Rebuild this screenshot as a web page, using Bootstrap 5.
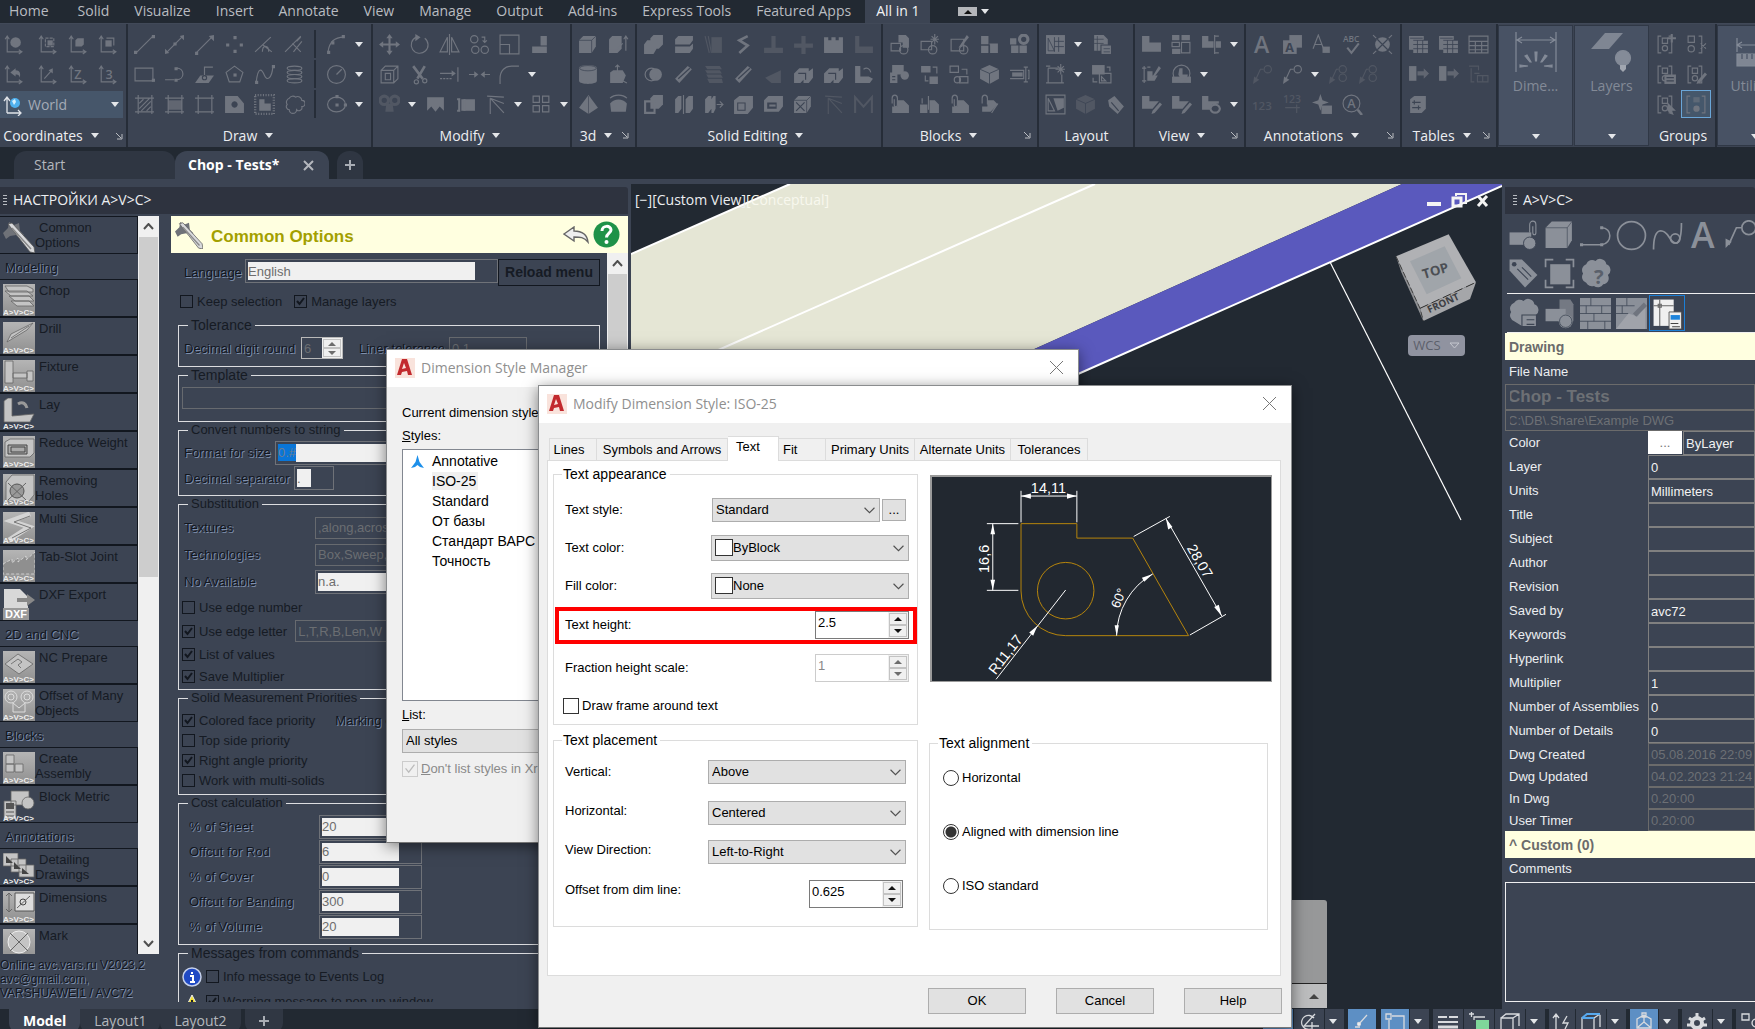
<!DOCTYPE html>
<html lang="en">
<head>
<meta charset="utf-8">
<meta name="viewport" content="width=device-width, initial-scale=1">
<title>Chop - Tests</title>
<link rel="stylesheet" href="https://cdn.jsdelivr.net/npm/bootstrap@5.3.0/dist/css/bootstrap.min.css">
<style>
:root{--ink:#222932;--panel:#3c4453;--head:#2e333f;--ui:"Open Sans","Noto Sans",sans-serif;--gdi:"Liberation Sans",Arial,sans-serif;--cream:#ffffe0}
body{font:14px/18px var(--ui);background:var(--ink);color:#eceef1;overflow:hidden}
button,input,select,textarea{font:inherit;color:inherit;border-radius:0}
svg{display:block;flex:none}
.tri{width:0;height:0;border:4px solid transparent;border-top:5px solid #e4e6e9;border-bottom:0;flex:none}
/* menu */
.menubar{height:23px;background:var(--ink)}
.menubar a{color:#b9bcc1;text-decoration:none;padding:0 12px 0 13px;line-height:21px;height:23px;white-space:nowrap}
.menubar a:first-child{padding-left:9px}
.menubar a.on{background:var(--panel);color:#f2f3f5;padding:0 11px;margin-left:2px}
.chip{width:19px;height:9px;background:#b4b6ba;border:0;padding:0}
/* ribbon */
.ribbon{height:124px;background:var(--panel);border-top:1px solid #414958;overflow:hidden}
.pane{border-right:2px solid #262d38;padding:5px 0 0 1px;flex:none;display:flex;flex-direction:column;height:123px}
.irow{display:flex;height:30px;align-items:center;color:#70757f}
.ucs{padding-left:0}
.ucs .rb:first-child{width:26px;margin-right:6px}
.rb{width:30px;height:28px;border:0;background:none;padding:0;display:flex;align-items:center;justify-content:center;color:inherit;flex:none}
.rb svg{width:21px;height:21px;fill:none;stroke:currentColor;stroke-width:1.1}
.rb svg .f,.tool svg .f{fill:currentColor;stroke:none}
.rb.dim{color:#515763}
.rb.on{background:#45576b;border:1px solid #6aa6d8}
.cr{width:16px;border:0;background:none;padding:0;display:flex;justify-content:center;flex:none}
.bar{width:2px;height:28px;background:#262d38;margin:0 5px}
.ptitle{display:flex;align-items:center;margin-top:5px;height:23px;gap:8px;justify-content:center;position:relative}
.launch{position:absolute;right:6px;top:7px}
.slab{background:#485264;border:1px solid #303846;color:#838a97;flex:none;display:flex;flex-direction:column;align-items:center;justify-content:space-between;padding:6px 0 6px;margin:1px 1px 1px 0;height:121px}
.slab span{margin-bottom:34px}
.slab svg{fill:none;stroke:#848b98;stroke-width:1.2}
/* document tabs */
.doctabs{height:32px;background:var(--ink);padding:4px 0 0 14px}
.doctabs .dt{height:28px;line-height:28px;border:0;padding:0 20px;text-align:left;border-radius:12px 12px 0 0;background:#2f3642;color:#b4b7bd}
.doctabs .dt.on{background:var(--panel);color:#fff;font-weight:700}
.dt.plus{width:26px}
/* palettes */
.pal{background:var(--panel)}
.palhead{height:27px;background:var(--head);display:flex;align-items:center;padding-left:3px;gap:6px;border-radius:0 3px 0 0}
.palhead span{padding-bottom:1px}
.grip{width:4px;height:11px;background:repeating-linear-gradient(#b8bbc0 0 1px,transparent 1px 3px)}
.gdi{font:13px/15px var(--gdi)}
.scroll{background:#f0f0f0;width:21px;flex:none;display:flex;flex-direction:column;align-items:center}
.scroll button{border:0;background:#f0f0f0;height:21px;width:100%;padding:0;display:flex;align-items:center;justify-content:center}
.thumb{background:#cdcdcd;width:19px}
.chev{fill:none;stroke:#505050;stroke-width:2}
.nav-l{width:138px;flex:none;overflow:hidden}
.navi{display:flex;width:138px;height:38px;padding:4px 0 0 3px;border:1px solid #12171f;border-width:1px 1px 1px 0;background:none;text-align:left;color:#161b24;align-items:flex-start}
.navi span{text-indent:4px;margin-top:-1px}
.navi svg{width:32px;height:32px}
.navh{height:25px;line-height:27px;padding-left:5px}
.emb{color:#12161e;text-shadow:1px 1px 0 #7f90ae}
.side{color:#161b24}
.yhead{background:var(--cream);height:37px;flex:none}
.yhead h1{font:bold 17px/20px var(--gdi);color:#a3a000;margin:0;padding:5px 0 0 8px}
.side fieldset{border:1px solid #dcdde0;padding:0 3px;margin:0 7px;min-width:0}
.side legend{float:none;width:auto;font:14px/16px var(--gdi);padding:0 3px;margin:0 0 0 6px}
.side legend.sm{font-size:13px}
.fr{display:flex;align-items:center;height:25px;white-space:nowrap}
.fr>label:first-child{padding-left:2px;flex:none}
.fin{border:1px solid #6f7278;background:transparent;height:24px;padding:2px;display:flex;min-width:0}
.fin input{border:0;background:#f0f0f0;color:#6d6d6d;width:100%;padding:0;height:18px;min-width:0;font-size:13px}
.cost{width:103px;padding-right:22px}
.fdis{border:1px solid #676a6f;background:transparent;color:#6b6e72;height:22px;padding:0 2px;min-width:0}
.ck{appearance:none;width:13px;height:13px;border:1px solid #12171f;margin:0 4px 0 0;flex:none;background:none}
.ck:checked{background:url("data:image/svg+xml,%3Csvg xmlns='http://www.w3.org/2000/svg' viewBox='0 0 11 11'%3E%3Cpath d='M2 5l2.5 3L9 2' fill='none' stroke='%2312171f' stroke-width='2'/%3E%3C/svg%3E")}
.fr label.c{display:flex;align-items:center}
.fr label.c:first-child{padding:0}
.spin{display:flex;flex-direction:column;width:20px;flex:none;background:#f0f0f0;padding:1px}
.spin button{flex:1;border:1px solid #c3c3c3;background:#f0f0f0;padding:0;display:flex;align-items:center;justify-content:center;min-height:0}
.up,.dn{width:0;height:0;border:4px solid transparent}
.up{border-top:0;border-bottom-color:#111}.dn{border-bottom:0;border-top-color:#111}
.gray .up{border-bottom-color:#6d6d6d}.gray .dn{border-top-color:#6d6d6d}
/* drawing area */
.view{position:relative;overflow:hidden;background:var(--ink)}
.view>svg.scene{position:absolute;inset:0}
.over{position:absolute}
/* right palette */
.rp{width:253px;flex:none;padding-left:3px;overflow:hidden}
.tool{width:36px;height:36px;border:0;background:none;padding:0;display:flex;align-items:center;justify-content:center;color:#8b9099;flex:none}
.tool svg{width:31px;height:31px;fill:none;stroke:currentColor;stroke-width:1.1}
.tool.on{border:1px solid #1c7fd6;color:#f0f0f0}
.rule{height:1px;background:#f0f0f0;margin-left:2px}
.ysub{background:var(--cream);height:27px;line-height:29px;color:#6b6b6b;font-weight:700;padding-left:4px;font-size:14px}
.prop{display:flex;height:24px}
.prop>label{width:143px;flex:none;padding:4px 0 0 4px;white-space:nowrap}
.prop input{flex:1;min-width:0;border:1px solid #808080;background:none;padding:0 2px;color:#f2f2f2}
.prop.low{height:22px}.prop.low input,.path{color:#6d7075!important;border-color:#6b6b6b!important}
/* dialogs */
.dlg{position:absolute;background:#f0f0f0;color:#000;border:1px solid #8a8c8e;border-bottom-color:#777;box-shadow:0 3px 14px rgba(0,0,0,.5);font:13px/16px var(--gdi)}
.dtitle{height:37px;background:#fff;color:#8f8f8f;display:flex;align-items:center;padding:0 15px 2px 8px;gap:6px;font:14px/20px var(--ui)}
.dtitle button{margin-left:auto;border:0;background:none;padding:0}
.dsel{appearance:none;height:24px;border:1px solid #adadad;border-radius:0;color:#000;padding:0 3px;background:#e1e1e1 url("data:image/svg+xml,%3Csvg xmlns='http://www.w3.org/2000/svg' viewBox='0 0 10 6'%3E%3Cpath d='M.5.5L5 5L9.500.5' fill='none' stroke='%23505050'/%3E%3C/svg%3E") no-repeat right 4px center/11px 7px;min-width:0}
.dbtn{border:1px solid #adadad;background:#e1e1e1;padding:0}
.ttab{border:1px solid #dcdcdc;border-left:0;border-bottom:0;background:#f0f0f0;height:22px;padding:0;white-space:nowrap}
.ttab:first-child{border-left:1px solid #dcdcdc}
.ttab.on{background:#fff;height:25px;position:relative;margin-bottom:-1px;padding-bottom:5px}
.dlg fieldset{border:1px solid #dcdcdc;padding:0 8px 0 11px;min-width:0}
.dlg legend{float:none;width:auto;font:14px/16px var(--gdi);padding:0 3px 0 1px;margin:0 0 0 -3px}
.drow{display:flex;align-items:center;height:38px}
.drow>.nm{margin-right:auto;white-space:nowrap}
.num{display:flex;border:1px solid #7a7a7a;width:94px;height:28px;background:#fff}
.num input{border:0;padding:0 2px 5px;width:72px;flex:1;min-width:0;background:#fff}
.num.gray{border-color:#ccc}.num.gray input{color:#888}
.sw{position:absolute;left:4px;top:4px;width:18px;height:17px;background:#fff;border:1px solid #333}
.dck{appearance:none;width:16px;height:16px;border:1px solid #333;background:#fff;margin:0 3px 0 0;flex:none}
.dck:checked{background:url("data:image/svg+xml,%3Csvg xmlns='http://www.w3.org/2000/svg' viewBox='0 0 11 11'%3E%3Cpath d='M2 5l2.500 3L9 2' fill='none' stroke='%23bbb' stroke-width='1'/%3E%3C/svg%3E")}
.drad{appearance:none;width:16px;height:16px;border:1px solid #333;border-radius:50%;margin:0 3px 0 0;background:#fff}
.drad:checked{background:radial-gradient(#333 0 5px,#fff 6px)}
.rad{display:flex;align-items:center;height:54px}
.hot{position:absolute;border:4px solid #f00;left:2px;right:1px;top:141px;height:37px;pointer-events:none}
.lbx{background:#fff;border:1px solid #828790;height:252px;padding-top:2px}
.lbx div{height:20px;line-height:18px;padding-left:29px;font-size:14px;position:relative;white-space:nowrap}
/* status bar */
.status{height:20px;background:var(--ink);overflow:hidden;flex:none}
.lay{border:0;height:24px;padding:0 14px;background:#303743;color:#b4b7bd;border-radius:0 0 10px 10px;line-height:22px}
.lay.on{background:var(--panel);color:#fff;font-weight:700}
.st{width:30px;height:24px;border:0;background:var(--panel);padding:0;display:flex;align-items:center;justify-content:center}
.st.on{background:#5d8fc4}
.st svg{width:20px;height:18px;fill:none;stroke:#d8dade;stroke-width:1.3}
.sc{width:19px;height:24px;border:0;background:var(--panel);padding:0 0 0 4px;margin-right:3px;display:flex;align-items:center}
</style>
</head>
<body class="vh-100 d-flex flex-column position-relative">

<nav class="menubar d-flex flex-none">
<a href="#">Home</a><a href="#" class="ms-1">Solid</a><a href="#">Visualize</a><a href="#">Insert</a><a href="#">Annotate</a><a href="#">View</a><a href="#">Manage</a><a href="#">Output</a><a href="#">Add-ins</a><a href="#">Express Tools</a><a href="#">Featured Apps</a><a href="#" class="on">All in 1</a>
<span class="d-flex align-items-center gap-1 ps-4 ms-1"><button class="chip d-flex align-items-center justify-content-center" aria-label="Minimize ribbon"><i class="up"></i></button><i class="tri"></i></span>
</nav>

<div class="ribbon d-flex flex-shrink-0">
 <section class="pane ucs" style="width:128px">
  <div class="irow" data-icons="ucsw ucsb ucsc ucsv"></div>
  <div class="irow" data-icons="ucsu ucsa ucsz ucs3"></div>
  <button class="d-flex align-items-center gap-1 border-0 p-0 text-start" style="background:#46566a;height:27px;width:123px;color:#a4abb6;margin-top:2px"><svg width="24" height="22" viewBox="0 0 24 22" fill="none" stroke="#dfe3e8" stroke-width="1.3"><path d="M7 19V4M4 7l3-4 3 4M7 19h14M18 16l3 3-3 3"/><circle cx="15" cy="9" r="5" fill="#4fb0ee" stroke="none"/><path d="M12 7l3-2 1 3-2 3zM17 10l2-1" fill="#d6f0ff" stroke="none"/></svg>World<i class="tri ms-auto me-1"></i></button>
  <div class="ptitle" style="margin-top:6px">Coordinates <i class="tri"></i><svg class="ms-2" width="8" height="8" stroke="#b9bcc1" fill="none"><path d="M1 1l5 5M2 7h5V2"/></svg></div>
 </section>
 <section class="pane" style="width:245px">
  <div class="irow" data-icons="line xline ray pts arcn arct | arc+"></div>
  <div class="irow" data-icons="rect pline plane poly spline helix | circ+"></div>
  <div class="irow" data-icons="hatch grad bound hole region cloud | ell+"></div>
  <div class="ptitle pe-1">Draw <i class="tri"></i></div>
 </section>
 <section class="pane" style="width:199px">
  <div class="irow" data-icons="move rot mirror copy scale lshape"></div>
  <div class="irow" data-icons="box3 cut extend join fillet+"></div>
  <div class="irow" data-icons="-offs+ flag slab ray3+ array+"></div>
  <div class="ptitle pe-1">Modify <i class="tri"></i></div>
 </section>
 <section class="pane" style="width:65px">
  <div class="irow" data-icons="cube ext"></div>
  <div class="irow" data-icons="cyl pull"></div>
  <div class="irow" data-icons="pyr rev"></div>
  <div class="ptitle pe-3">3d <i class="tri"></i><svg class="launch" width="8" height="8" stroke="#b9bcc1" fill="none"><path d="M1 1l5 5M2 7h5V2"/></svg></div>
 </section>
 <section class="pane" style="width:246px">
  <div class="irow" data-icons="union slice -chop zig -tee -cross comb -lsh2"></div>
  <div class="irow" data-icons="sub drill -chops drill -wedge blk blk lay"></div>
  <div class="irow" data-icons="inter split extf shell weight holes -ray3 -mm"></div>
  <div class="ptitle pe-2">Solid Editing <i class="tri"></i></div>
 </section>
 <section class="pane" style="width:156px">
  <div class="irow" data-icons="blkin blknew blked asm asm2"></div>
  <div class="irow" data-icons="metric swap tree box3f rename"></div>
  <div class="irow" data-icons="xref xjoin xref xrefe"></div>
  <div class="ptitle pe-4">Blocks <i class="tri"></i><svg class="launch" width="8" height="8" stroke="#b9bcc1" fill="none"><path d="M1 1l5 5M2 7h5V2"/></svg></div>
 </section>
 <section class="pane" style="width:96px">
  <div class="irow" data-icons="lay1+ page"></div>
  <div class="irow" data-icons="newlay+ layx"></div>
  <div class="irow" data-icons="lay2 -box3f tag"></div>
  <div class="ptitle">Layout</div>
 </section>
 <section class="pane" style="width:111px">
  <div class="irow" data-icons="vbase vgrid vsec+"></div>
  <div class="irow" data-icons="vsed vdet+"></div>
  <div class="irow" data-icons="vedit vedit vupd+"></div>
  <div class="ptitle pe-3">View <i class="tri"></i><svg class="launch" width="8" height="8" stroke="#b9bcc1" fill="none"><path d="M1 1l5 5M2 7h5V2"/></svg></div>
 </section>
 <section class="pane" style="width:156px">
  <div class="irow" data-icons="ta tab ta2 abc xmark"></div>
  <div class="irow" data-icons="-lead lead+ -lead2 -lead2"></div>
  <div class="irow" data-icons="-n123 -n12 star find"></div>
  <div class="ptitle pe-4">Annotations <i class="tri"></i><svg class="launch" width="8" height="8" stroke="#b9bcc1" fill="none"><path d="M1 1l5 5M2 7h5V2"/></svg></div>
 </section>
 <section class="pane" style="width:96px">
  <div class="irow" data-icons="tbl1 tbl1 tbl"></div>
  <div class="irow" data-icons="texp texp -ttree"></div>
  <div class="irow" data-icons="calc"></div>
  <div class="ptitle pe-3">Tables <i class="tri"></i><svg class="launch" width="8" height="8" stroke="#b9bcc1" fill="none"><path d="M1 1l5 5M2 7h5V2"/></svg></div>
 </section>
 <button class="slab" style="width:75px"><svg width="44" height="40" viewBox="0 0 44 40"><path d="M2 0v40M42 0v40M4 8h36M8 5L3 8l5 3M36 5l5 3-5 3"/><path d="M21 20h2l-.5 9h-1zM11 24l2-1 4 7h-1zM33 24l-2-1-4 7h1zM6 33l8 1-8 1zM38 33l-8 1 8 1z" fill="#848b98"/></svg><span>Dime...</span><i class="tri"></i></button>
 <button class="slab" style="width:75px"><svg width="44" height="40" viewBox="0 0 44 40"><path d="M15 1h18L19 17H1z" fill="#7f8693" stroke="none"/><circle cx="33" cy="26" r="7.500" fill="#848b98"/><path d="M30 33h6v4l-3 3-3-3z" fill="#a1a6b0" stroke="none"/></svg><span>Layers</span><i class="tri"></i></button>
 <section class="pane" style="width:67px">
  <div class="irow" data-icons="grp grpx"></div>
  <div class="irow" data-icons="grpl grpe"></div>
  <div class="irow" data-icons="grps *grpo"></div>
  <div class="ptitle">Groups</div>
 </section>
 <button class="slab" style="width:76px"><svg width="44" height="40" viewBox="0 0 44 40"><path d="M4 6v14M4 13h36M9 10l-5 3 5 3"/><path d="M4 22h38v12H4z" fill="#7f8693"/><path d="M9 22v5M14 22v5M19 22v5M24 22v5" stroke="#485264"/></svg><span>Utilities</span><i class="tri"></i></button>
</div>

<div class="doctabs d-flex flex-shrink-0">
 <button class="dt" style="width:161px">Start</button>
 <button class="dt on d-flex align-items-center" style="width:154px;padding:0 15px 0 13px">Chop - Tests*<svg class="ms-auto" width="11" height="11" stroke="#b4b7bd" stroke-width="2"><path d="M1 1l9 9M10 1L1 10"/></svg></button>
 <button class="dt plus ms-2 p-0 d-flex align-items-center justify-content-center" aria-label="New tab"><svg width="12" height="12" stroke="#a9adb4" stroke-width="2"><path d="M6 1v10M1 6h10"/></svg></button>
</div>

<main class="d-flex flex-grow-1" style="min-height:0;border-top:5px solid #3c4453">
 <aside class="pal d-flex flex-column" style="width:631px;flex:none;padding:3px 3px 7px 0">
  <div class="palhead flex-shrink-0"><i class="grip"></i><span>НАСТРОЙКИ A&gt;V&gt;C&gt;</span></div>
  <div class="d-flex flex-grow-1" style="min-height:0;padding-top:2px">
   <div class="d-flex flex-column gdi" style="width:171px;flex:none">
    <div class="d-flex flex-grow-1" style="min-height:0">
     <nav class="nav-l" id="nav">
      <button class="navi" data-i="caliper"><span>Common<br>Options</span></button>
      <div class="navh emb">Modeling</div>
      <button class="navi" data-i="n_chop"><span>Chop</span></button>
      <button class="navi" data-i="n_drill"><span>Drill</span></button>
      <button class="navi" data-i="n_fix"><span>Fixture</span></button>
      <button class="navi" data-i="n_lay"><span>Lay</span></button>
      <button class="navi" data-i="n_red"><span>Reduce&nbsp;Weight</span></button>
      <button class="navi" data-i="n_hole"><span>Removing<br>Holes</span></button>
      <button class="navi" data-i="n_multi"><span>Multi Slice</span></button>
      <button class="navi" data-i="n_tab"><span>Tab-Slot Joint</span></button>
      <button class="navi" data-i="n_dxf"><span>DXF Export</span></button>
      <div class="navh emb">2D and CNC</div>
      <button class="navi" data-i="n_nc"><span>NC Prepare</span></button>
      <button class="navi" data-i="n_off"><span>Offset of Many<br>Objects</span></button>
      <div class="navh emb">Blocks</div>
      <button class="navi" data-i="n_asm"><span>Create<br>Assembly</span></button>
      <button class="navi" data-i="n_met"><span>Block Metric</span></button>
      <div class="navh emb">Annotations</div>
      <button class="navi" data-i="n_det"><span>Detailing<br>Drawings</span></button>
      <button class="navi" data-i="n_dim"><span>Dimensions</span></button>
      <button class="navi" data-i="n_mark"><span>Mark</span></button>
     </nav>
     <div class="scroll"><button aria-label="Up"><svg class="chev" width="11" height="7"><path d="M1 6l4.500-5L10 6"/></svg></button><div class="thumb" style="height:340px"></div><button class="mt-auto" aria-label="Down"><svg class="chev" width="11" height="7"><path d="M1 1l4.500 5L10 1"/></svg></button></div>
    </div>
    <div class="emb" style="height:49px;padding-top:4px;font-size:12px;line-height:14px">Online avc.vars.ru V2023.2<br>avc@gmail.com,<br>VARSHUAWEI1 / AVC72</div>
   </div>
   <div class="d-flex flex-column flex-grow-1" style="min-width:0">
    <header class="yhead d-flex align-items-center ps-1 pe-2"><svg width="28" height="28" viewBox="0 0 32 32"><use href="#caliper"/></svg><h1>Common Options</h1>
     <svg class="ms-auto me-1" width="26" height="18" viewBox="0 0 26 18" fill="#eee" stroke="#666" stroke-width="1.4"><path d="M1 8l10-7v4c8 0 13 3 14 11-4-5-8-5-14-5v4z"/></svg><svg width="27" height="27" viewBox="0 0 27 27"><circle cx="13.500" cy="13.500" r="13" fill="#1f9248"/><path d="M9 10c0-6 9-6 9-1 0 3-4.500 3.500-4.500 7.500" fill="none" stroke="#fff" stroke-width="3"/><circle cx="13.500" cy="21" r="2" fill="#fff"/></svg></header>
    <div class="d-flex flex-grow-1" style="min-height:0">
     <form class="side gdi flex-grow-1 overflow-hidden" style="padding-top:6px;min-width:0">
      <div class="d-flex align-items-start" style="padding:0 7px 0 13px"><label class="emb" for="lang" style="width:58px;padding-top:6px">Language</label><span class="fin flex-grow-1" style="padding-right:22px;margin-left:3px"><input id="lang" value="English"></span><button type="button" class="border p-0 fw-bold" style="width:102px;height:27px;background:none;border-color:#12171f!important;font-size:14px">Reload menu</button></div>
      <div class="fr" style="height:31px;padding-left:9px"><label class="c"><input type="checkbox" class="ck">Keep selection</label><label class="c" style="padding-left:12px"><input type="checkbox" class="ck" checked>Manage layers</label></div>
      <fieldset style="padding-bottom:3px"><legend>Tolerance</legend><div class="fr" style="height:30px"><label class="emb" for="dr" style="width:119px">Decimal digit round</label><span class="d-flex gray" style="border:1px solid #b9b9b9;height:22px;width:42px"><input id="dr" value="6" class="border-0 p-0" style="width:20px;background:none;color:#6b6e72;text-indent:2px"><span class="spin"><button type="button" aria-label="More"><i class="up"></i></button><button type="button" aria-label="Less"><i class="dn"></i></button></span></span><label class="emb ms-3" for="lt">Liner tolerance</label><input id="lt" class="fdis ms-1" style="width:78px" value="0.1" disabled></div></fieldset>
      <fieldset style="padding-bottom:8px"><legend>Template</legend><div class="fr" style="height:30px"><input class="fdis w-100" disabled aria-label="Template"></div></fieldset>
      <fieldset style="padding-top:2px;padding-bottom:4px"><legend class="sm">Convert numbers to string</legend><div class="fr"><label class="emb" for="ffs" style="width:93px">Format for size</label><span class="fin flex-grow-1"><span style="background:#0a76d8;color:#6d7f92;line-height:18px;height:17px">0.#</span><input id="ffs" value=""></span></div><div class="fr" style="height:26px"><label class="emb" for="ds" style="width:112px">Decimal separator</label><span class="fin" style="width:40px;padding-right:22px"><input id="ds" value="."></span></div></fieldset>
      <fieldset style="padding-top:2px;padding-bottom:3px"><legend class="sm">Substitution</legend>
       <div class="fr" style="height:27px"><label class="emb" for="tx" style="width:133px">Textures</label><input id="tx" class="fdis flex-grow-1" value=",along,across" disabled></div>
       <div class="fr" style="height:27px"><label class="emb" for="tc" style="width:133px">Technologies</label><input id="tc" class="fdis flex-grow-1" value="Box,Sweep,Extrude" disabled></div>
       <div class="fr" style="height:27px"><label class="emb" for="na" style="width:133px">No Available</label><span class="fin flex-grow-1"><input id="na" value="n.a."></span></div>
       <div class="fr" style="height:24px"><label class="c"><input type="checkbox" class="ck">Use edge number</label></div>
       <div class="fr" style="height:24px"><label class="c"><input type="checkbox" class="ck" checked>Use edge letter</label><input class="fdis flex-grow-1 ms-2" value="L,T,R,B,Len,W" disabled aria-label="Edge letters"></div>
       <div class="fr" style="height:23px"><label class="c"><input type="checkbox" class="ck" checked>List of values</label></div>
       <div class="fr" style="height:20px"><label class="c"><input type="checkbox" class="ck" checked>Save Multiplier</label></div></fieldset>
      <fieldset style="padding-top:4px;padding-bottom:4px"><legend class="sm">Solid Measurement Priorities</legend>
       <div class="fr" style="height:20px"><label class="c"><input type="checkbox" class="ck" checked>Colored face priority</label><span class="emb" style="padding-left:20px">Marking color</span></div>
       <div class="fr" style="height:20px"><label class="c"><input type="checkbox" class="ck">Top side priority</label></div>
       <div class="fr" style="height:20px"><label class="c"><input type="checkbox" class="ck" checked>Right angle priority</label></div>
       <div class="fr" style="height:20px"><label class="c"><input type="checkbox" class="ck">Work with multi-solids</label></div></fieldset>
      <fieldset style="padding:3px 3px 5px 8px"><legend class="sm" style="margin-left:1px">Cost calculation</legend>
       <div class="fr"><label class="emb" for="c1" style="width:132px">% of Sheet</label><span class="fin cost"><input id="c1" value="20"></span></div>
       <div class="fr"><label class="emb" for="c2" style="width:132px">Offcut for Rod</label><span class="fin cost"><input id="c2" value="6"></span></div>
       <div class="fr"><label class="emb" for="c3" style="width:132px">% of Cover</label><span class="fin cost"><input id="c3" value="0"></span></div>
       <div class="fr"><label class="emb" for="c4" style="width:132px">Offcut for Banding</label><span class="fin cost"><input id="c4" value="300"></span></div>
       <div class="fr"><label class="emb" for="c5" style="width:132px">% of Volume</label><span class="fin cost"><input id="c5" value="20"></span></div></fieldset>
      <fieldset style="padding-top:3px"><legend>Messages from commands</legend>
       <div class="fr"><svg width="20" height="20" viewBox="0 0 20 20"><circle cx="10" cy="10" r="9" fill="#1f49c4" stroke="#c5d0ea" stroke-width="1.500"/><path d="M8 9h3v6M8 15h5M10 5v2" stroke="#fff" stroke-width="2" fill="none"/></svg><label class="c ms-1"><input type="checkbox" class="ck">Info message to Events Log</label></div>
       <div class="fr"><svg width="20" height="20" viewBox="0 0 20 20"><path d="M10 3l7 14H3z" fill="#f2e02c" stroke="#eee"/><path d="M10 8v5" stroke="#222" stroke-width="2"/></svg><label class="c ms-1"><input type="checkbox" class="ck" checked>Warning message to pop-up window</label></div></fieldset>
     </form>
     <div class="scroll"><button aria-label="Up"><svg class="chev" width="11" height="7"><path d="M1 6l4.500-5L10 6"/></svg></button><div class="thumb" style="height:340px"></div></div>
    </div>
   </div>
  </div>
 </aside>

 <section class="view flex-grow-1">
  <svg class="scene w-100 h-100" viewBox="631 184 871 825" preserveAspectRatio="xMaxYMin slice"><path d="M631 254L790 184H1402L961 382H631z" fill="#e5e6d5"/><path d="M1402 184H1502V186L1060 382H961z" fill="#5a59bd"/><path d="M631 254L790 184M657 377L1095 184M1502 186L1060 382" stroke="#fff" stroke-width="2"/><path d="M1330 262L1461 520" stroke="#fff" stroke-width="1.200"/></svg>
  <div class="over" style="left:4px;top:7px">[−][Custom View]<span style="color:#f8f8ee">[Conceptual]</span></div>
  <svg class="over" style="right:10px;top:8px" width="66" height="18" viewBox="0 0 66 18" fill="none" stroke="#f4f4f4"><path d="M1 12h14" stroke-width="4"/><path d="M27 6h8v8h-8z" stroke-width="3"/><path d="M30 4V2h10v9h-3" stroke-width="2"/><path d="M52 4l9 10M61 4l-9 10" stroke-width="3"/></svg>
  <svg class="over" style="right:2px;top:39px" width="122" height="120" viewBox="60 120 366 360"><path d="M114 220L272 154 354 298 186 376z" fill="#b0b1b4"/><path d="M114 220L186 376 196 414 130 268z" fill="#8f9094"/><path d="M186 376L354 298 336 348 196 414z" fill="#a5a6a9"/><path d="M156 235L260 190 310 286 206 334z" fill="#a0a5aa"/><path d="M186 376L354 298" stroke="#333" stroke-width="3" stroke-dasharray="26 12"/><path d="M114 220L186 376 196 414" stroke="#444" stroke-width="3" stroke-dasharray="18 8" fill="none"/><text transform="translate(198 288) rotate(-17)" font-family="Open Sans" font-weight="700" font-size="40" fill="#4c4f54">TOP</text><text transform="translate(214 391) rotate(-25)" font-family="Open Sans" font-weight="700" font-size="30" fill="#3e4044">FRONT</text></svg>
  <button class="over border-0 p-0 d-flex align-items-center justify-content-center gap-2" style="right:37px;top:151px;width:57px;height:21px;background:#9093a0;border-radius:4px;color:#5c606b;font:13px/19px var(--ui)">WCS <svg width="11" height="7" fill="none" stroke="#c5c7cf"><path d="M1 1h9L5.500 6z"/></svg></button>
  <div class="over" style="left:400px;right:175px;bottom:1px;height:108px;background:#979899;border-radius:3px"><div class="over w-100 d-flex align-items-center justify-content-end pe-2" style="bottom:0;height:25px;background:#bcbdbe;border-top:1px solid #222"><i class="up" style="border-bottom-color:#444;border-width:0 5px 5px"></i></div></div>
 </section>

 <aside class="pal rp d-flex flex-column" style="padding-top:3px;padding-bottom:7px">
  <div class="palhead flex-shrink-0 ps-2"><i class="grip"></i><span>A&gt;V&gt;C&gt;</span></div>
  <div class="d-flex" style="height:40px;padding-top:3px" data-tools="t_blk t_cube t_pl t_circ t_spl t_a t_lead"></div>
  <div class="d-flex" style="height:39px;padding-top:1px" data-tools="t_tag t_reg t_cloud"></div>
  <div class="rule"></div>
  <div class="d-flex align-items-center" style="height:38px" data-tools="t_cl2 t_blk2 t_brick t_brick2 *t_dwg"></div>
  <div class="rule"></div>
  <div class="gdi d-flex flex-column flex-grow-1" style="min-height:0">
   <div class="ysub">Drawing</div>
   <label for="fn" style="height:24px;padding:4px 0 0 4px">File Name</label>
   <input id="fn" class="path px-1" style="height:26px;border:1px solid;background:none;font:bold 17px var(--gdi);text-indent:-2px" value="Chop - Tests" disabled>
   <input class="path px-1" style="height:21px;border:1px solid;background:none;text-indent:-2px" value="C:\DB\.Share\Example DWG" disabled aria-label="Path">
   <div class="prop"><label for="p0">Color</label><button class="border-0 p-0" style="width:34px;background:#fff;color:#777;height:23px;margin-right:1px">...</button><input id="p0" value="ByLayer"></div>
   <div class="prop"><label for="p1">Layer</label><input id="p1" value="0"></div>
   <div class="prop"><label for="p2">Units</label><input id="p2" value="Millimeters"></div>
   <div class="prop"><label for="p3">Title</label><input id="p3"></div>
   <div class="prop"><label for="p4">Subject</label><input id="p4"></div>
   <div class="prop"><label for="p5">Author</label><input id="p5"></div>
   <div class="prop"><label for="p6">Revision</label><input id="p6"></div>
   <div class="prop"><label for="p7">Saved by</label><input id="p7" value="avc72"></div>
   <div class="prop"><label for="p8">Keywords</label><input id="p8"></div>
   <div class="prop"><label for="p9">Hyperlink</label><input id="p9"></div>
   <div class="prop"><label for="p10">Multiplier</label><input id="p10" value="1"></div>
   <div class="prop"><label for="p11">Number of Assemblies</label><input id="p11" value="0"></div>
   <div class="prop"><label for="p12">Number of Details</label><input id="p12" value="0"></div>
   <div class="prop low"><label for="p13">Dwg Created</label><input id="p13" value="05.08.2016 22:09:54" disabled></div>
   <div class="prop low"><label for="p14">Dwg Updated</label><input id="p14" value="04.02.2023 21:24:20" disabled></div>
   <div class="prop low"><label for="p15">In Dwg</label><input id="p15" value="0.20:00" disabled></div>
   <div class="prop low"><label for="p16">User Timer</label><input id="p16" value="0.20:00" disabled></div>
   <div class="ysub">^ Custom (0)</div>
   <label for="cm" style="height:24px;padding:3px 0 0 4px">Comments</label>
   <textarea id="cm" class="flex-grow-1" style="border:1px solid #f0f0f0;background:none;resize:none;margin-right:-2px"></textarea>
  </div>
 </aside>
</main>

<footer class="status d-flex">
 <div class="d-flex" style="padding-left:9px"><button class="lay on">Model</button><button class="lay">Layout1</button><button class="lay">Layout2</button><button class="lay ms-1" aria-label="Add layout"><svg width="10" height="10" stroke="#a9adb4" stroke-width="2"><path d="M5 0v10M0 5h10"/></svg></button></div>
 <div class="d-flex ms-auto" style="gap:1px;margin-right:-11px">
  <button class="st on" aria-label="Snap"></button><button class="st"><svg viewBox="0 0 20 18"><path d="M15 6A7 7 0 1 0 12 17M16 2L5 14h15M13 10v7"/></svg></button><button class="sc"><i class="tri"></i></button>
  <button class="st on" style="width:28px"><svg viewBox="0 0 20 18"><path d="M15 3L7 12M3 15h5"/><circle cx="7" cy="12" r="1.500" fill="#fff"/></svg></button><button class="st on ms-1" style="width:28px"><svg viewBox="0 0 20 18"><path d="M1 2h5v5H1zM7 4h12v14M4 8v10"/></svg></button><button class="sc"><i class="tri"></i></button>
  <button class="st"><svg viewBox="0 0 20 18"><path d="M0 5h9M11 5h9M0 10h20" stroke-width="2"/><path d="M0 15h20" stroke-width="3"/></svg></button>
  <button class="st"><svg viewBox="0 0 20 18"><path d="M0 2h5M2.500 0v5M5 8V5h11"/><path d="M7 8h13v10H7z" fill="#7fd79a" stroke="none"/></svg></button>
  <button class="st"><svg viewBox="0 0 20 18"><path d="M1 6h12v12H1zM1 6l5-4h13v12M13 6l6-4"/></svg></button><button class="sc"><i class="tri"></i></button>
  <button class="st" style="width:26px"><svg viewBox="0 0 20 18"><path d="M4 18V2M1 6l3-4 3 4"/><path d="M15 4l-4 7h5l-3 6" /></svg></button>
  <button class="st"><svg viewBox="0 0 20 18"><path d="M1 6h12v12H1zM19 3v12M13 6l6-4"/><path d="M1 6l5-4h13M1 6h12" stroke="#58a9ee" stroke-width="2"/></svg></button><button class="sc"><i class="tri"></i></button>
  <button class="st on" style="width:28px"><svg viewBox="0 0 20 18"><path d="M10 3v7l-6 5M10 10l6 5M3 7l7-4 7 4v9H3zM8 1h4v4H8z"/></svg></button><button class="sc"><i class="tri"></i></button>
  <button class="st"><svg viewBox="0 0 20 18"><circle cx="10" cy="11" r="5" stroke-width="4"/><path d="M10 1v4M2 6l3 2M18 6l-3 2M0 13h4M20 13h-4" stroke-width="3"/></svg></button><button class="sc"><i class="tri"></i></button>
  <button class="st"><svg viewBox="0 0 20 18"><path d="M1 2h7v6H1z"/><circle cx="15" cy="11" r="4"/></svg></button>
 </div>
</footer>

<!-- Dimension Style Manager window -->
<div class="dlg" style="left:386px;top:349px;width:693px;height:494px">
 <div class="dtitle"><svg width="20" height="20" viewBox="0 0 20 20"><use href="#acad"/></svg><span>Dimension Style Manager</span><button aria-label="Close"><svg width="13" height="13" stroke="#777"><path d="M0 0l13 13M13 0L0 13"/></svg></button></div>
 <div style="padding:18px 15px 0;width:400px">
  <div style="height:23px">Current dimension style: ISO-25</div>
  <div style="height:21px"><u>S</u>tyles:</div>
  <div class="lbx"><div><svg class="position-absolute" style="left:8px;top:3px" width="13" height="14" fill="#1e90ea"><path d="M6.500 0l2 7 4.500 6-4-1-2.500-2-2.500 2-4 1L4.500 7z"/></svg>Annotative</div><div><span style="background:#f0f0f0;display:inline-block;padding-right:2px">ISO-25</span></div><div>Standard</div><div>От базы</div><div>Стандарт ВАРС</div><div>Точность</div></div>
  <label for="ls" class="d-block" style="padding:6px 0 5px;height:28px"><u>L</u>ist:</label>
  <select id="ls" class="dsel w-100"><option>All styles</option></select>
  <label class="d-flex align-items-center mt-2" style="color:#8a8a8a"><input type="checkbox" class="dck" style="border-color:#ccc" checked disabled><span><u>D</u>on't list styles in Xrefs</span></label>
 </div>
</div>

<!-- Modify Dimension Style window -->
<div class="dlg" style="left:538px;top:385px;width:754px;height:643px">
 <div class="dtitle"><svg width="20" height="20" viewBox="0 0 20 20"><use href="#acad"/></svg><span>Modify Dimension Style: ISO-25</span><button aria-label="Close"><svg width="13" height="13" stroke="#777"><path d="M0 0l13 13M13 0L0 13"/></svg></button></div>
 <div class="d-flex align-items-end" style="height:37px;padding:0 10px">
  <button class="ttab pe-2" style="width:48px">Lines</button><button class="ttab" style="width:131px">Symbols and Arrows</button><button class="ttab on" style="width:51px;padding-right:10px">Text</button><button class="ttab text-start ps-1" style="width:47px">Fit</button><button class="ttab" style="width:89px">Primary Units</button><button class="ttab" style="width:96px">Alternate Units</button><button class="ttab" style="width:77px">Tolerances</button>
 </div>
 <div class="d-flex" style="margin:0 10px 0 8px;height:516px;background:#fff;border:1px solid #dcdcdc;padding:5px 6px 0 5px;gap:12px">
  <div style="width:365px;flex:none" class="position-relative">
   <fieldset style="height:259px"><legend>Text appearance</legend>
    <div style="padding-top:9px">
    <div class="drow"><label class="nm" for="d1">Text style:</label><select id="d1" class="dsel" style="width:168px"><option>Standard</option></select><button class="dbtn" style="width:24px;height:22px;margin:0 3px 0 2px;line-height:14px">...</button></div>
    <div class="drow"><label class="nm" for="d2">Text color:</label><span class="position-relative"><select id="d2" class="dsel" style="width:198px;height:26px;padding-left:21px"><option>ByBlock</option></select><i class="sw"></i></span></div>
    <div class="drow"><label class="nm" for="d3">Fill color:</label><span class="position-relative"><select id="d3" class="dsel" style="width:198px;height:26px;padding-left:21px"><option>None</option></select><i class="sw"></i></span></div>
    <div class="drow" style="height:40px"><label class="nm" for="d4">Text height:</label><span class="num"><input id="d4" value="2.5"><span class="spin"><button aria-label="More"><i class="up"></i></button><button aria-label="Less"><i class="dn"></i></button></span></span></div>
    <div class="drow" style="height:46px"><label class="nm" for="d5">Fraction height scale:</label><span class="num gray"><input id="d5" value="1" disabled><span class="spin"><button aria-label="More"><i class="up"></i></button><button aria-label="Less"><i class="dn"></i></button></span></span></div>
    <label class="d-flex align-items-center" style="margin:7px 0 0 -2px"><input type="checkbox" class="dck">Draw frame around text</label>
    </div>
   </fieldset>
   <div class="hot"></div>
   <fieldset style="height:195px;padding-right:11px;margin-top:7px"><legend>Text placement</legend>
    <div style="padding-top:5px">
    <div class="drow"><label class="nm" for="e1">Vertical:</label><select id="e1" class="dsel" style="width:198px"><option>Above</option></select></div>
    <div class="drow" style="height:44px"><label class="nm pb-1" for="e2">Horizontal:</label><select id="e2" class="dsel" style="width:198px"><option>Centered</option></select></div>
    <div class="drow" style="height:34px"><label class="nm pb-1" for="e3">View Direction:</label><select id="e3" class="dsel" style="width:198px"><option>Left-to-Right</option></select></div>
    <div class="drow" style="height:50px;padding-right:3px"><label class="nm pb-2" for="e4">Offset from dim line:</label><span class="num"><input id="e4" value="0.625"><span class="spin"><button aria-label="More"><i class="up"></i></button><button aria-label="Less"><i class="dn"></i></button></span></span></div>
    </div>
   </fieldset>
  </div>
  <div class="flex-grow-1 d-flex flex-column justify-content-between" style="padding:9px 0 45px">
   <svg width="342" height="207" viewBox="94 346 1026 621" style="background:#222830;border:solid #9a9a9a;border-width:2px 1px 1px 2px">
    <g fill="none" stroke="#b8860b" stroke-width="3"><path d="M362 488H532V532H702L872 829H498A136 136 0 0 1 362 693z"/><circle cx="498" cy="692" r="86"/></g>
    <g fill="none" stroke="#fff" stroke-width="3"><path d="M362 388V484M532 388V484M362 404H532M258 488H354M258 691H354M276 488V691M705 527L815 466M876 827L986 764M803 472L973 769M498 690L286 962M653 829A220 220 0 0 1 763 641"/></g>
    <g fill="#fff"><path d="M362 404l30-8v16zM532 404l-30-8v16zM276 488l-7 32h14zM276 691l-7-32h14zM803 472l7 34 13-8zM973 769l-23-27 14-7zM412 799l-25 20 12 10zM763 641l-33 12 7 12zM653 829l-6-32h13z"/></g>
    <g fill="#fff" font-family="Liberation Sans" font-size="44"><text x="392" y="394">14,11</text><text transform="translate(264 638) rotate(-90)">16,6</text><text transform="translate(866 562) rotate(60)">28,07</text><text transform="translate(660 748) rotate(-68)" font-size="40">60°</text><text transform="translate(284 950) rotate(-52)">R11,17</text></g>
   </svg>
   <fieldset style="width:339px;height:195px;padding-left:13px;margin-left:-1px"><legend style="margin-left:-5px">Text alignment</legend>
    <div>
    <label class="rad"><input type="radio" name="al" class="drad">Horizontal</label>
    <label class="rad"><input type="radio" name="al" class="drad" checked>Aligned with dimension line</label>
    <label class="rad"><input type="radio" name="al" class="drad">ISO standard</label></div>
   </fieldset>
  </div>
 </div>
 <div class="d-flex justify-content-end" style="gap:30px;padding:12px 9px 0"><button class="dbtn" style="width:98px;height:26px">OK</button><button class="dbtn" style="width:98px;height:26px">Cancel</button><button class="dbtn" style="width:98px;height:26px">Help</button></div>
</div>

<svg width="0" height="0" class="position-absolute"><defs>
<linearGradient id="gr" x1="0" y1="0" x2="0" y2="1"><stop offset="0" stop-color="#b5b5b5"/><stop offset="1" stop-color="#8f8f8f"/></linearGradient>
<symbol id="caliper" viewBox="0 0 32 32"><path d="M0 12l5-5 1-6 5 3 5-2 1 8 4 4-4 3-4-3-6 1-4 3z" fill="#6f7278"/><path d="M5 3l4-1L31 26l1 6-5-1z" fill="#d8d9db" stroke="#555" stroke-width=".8"/><path d="M9 7l19 21" stroke="#888" stroke-width="1.500"/></symbol>
<symbol id="acad" viewBox="0 0 20 20"><path d="M0 0h20v20H0z" fill="#f9e3dc"/><path d="M7 1h5l5 16h-4l-1-4-5 1-1 3H2zM9 5l-2 6 4-1z" fill="#c22a2e" fill-rule="evenodd"/></symbol>
</defs></svg>

<script src="https://cdn.jsdelivr.net/npm/bootstrap@5.3.0/dist/js/bootstrap.bundle.min.js"></script>
<script>
/* 20x20 icon shapes; class f is a filled part */
const ax='<path d="M4 2v15h14M2 5l2-3 2 3M15 15l3 2-3 2"/>',
 br='<path d="M5 2H2v16h3M12 2h3v16h-3"/><path d="M6 4h5v5H6z"/><circle cx="8.500" cy="13.500" r="2.500"/>',
 pen='<path class="f" d="M18 8l2 2-7 8-3 1 1-3z"/>',
 cb='<path class="f" d="M1 6l4-4h12v10l-4 6H1z"/><path d="M1 6h12v12M13 6l4-4" stroke="#3c4453" stroke-width=".7"/>',
 vb='<path class="f" d="M1 2h7v6h11v9H1z"/>',
 dk='stroke="#3c4453"',
 T=(s,x,y,z)=>`<text class="f" x="${x}" y="${y}" font-size="${z}" font-weight="600" font-family="Open Sans">${s}</text>`;
const I={
ucsw:ax+'<circle class="f" cx="12" cy="8" r="5"/>',ucsb:ax+'<path d="M8 4h8v8H8z" stroke-dasharray="3 1"/><path class="f" d="M10 6h5v5h-5z"/>',ucsc:ax+'<path class="f" d="M8 6l2-2h6v6l-2 2H8z"/>',ucsv:ax+'<path class="f" d="M8 6h6v6H8z"/><path d="M9 4h7v7"/>',
ucsu:ax+'<path class="f" d="M7 8l5-4v2c4 0 5 3 4 7-1-3-2-3-4-3v2z"/>',ucsa:ax+'<path d="M7 14l7-8"/><path class="f" d="M15 4v5l-4-3z"/>',ucsz:ax+T('Z',7,14,12),ucs3:ax+T('3',8,14,12),
line:'<path d="M2 18L18 2"/><path class="f" d="M0 16h3v3H0zM17 1h3v3h-3z"/>',xline:'<path d="M3 17L17 3"/><path class="f" d="M1 19v-5l4 4zM19 1v5l-4-4zM9 8h3v3H9z"/>',ray:'<path d="M2 18L17 3"/><path class="f" d="M1 17h3v3H1zM19 1v6l-5-5z"/>',
pts:'<path class="f" d="M9 2h3v3H9zM2 9h3v3H2zM15 9h3v3h-3zM9 15h3v3H9z"/>',arcn:'<path d="M1 17L16 3M8 10l9 7M8 17c0-7 6-7 6 0"/>',arct:'<path d="M1 17L16 2M9 17l8-10M8 9l8 8M12 7l4-4"/>',
arc:'<path d="M2 17C3 8 7 3 17 3"/><path class="f" d="M1 16h3v3H1zM15 1h3v3h-3zM5 7h3v3H5z"/>',rect:'<path d="M1 4h17v12H1z"/><path class="f" d="M17 14h3v3h-3z"/>',pline:'<path d="M1 15h9M12 4c8 0 8 11 0 11"/><path class="f" d="M10 3h3v3h-3zM10 14h3v3h-3z"/>',plane:'<path class="f" d="M6 11h13l-5 7H1z"/><path d="M10 13V3h8" /><circle cx="10" cy="13" r="2" '+dk+'/>',
poly:'<path d="M10 2l8 6-3 9H5L2 8z"/><path class="f" d="M9 9h3v3H9z"/>',spline:'<path d="M2 18C4 0 8 6 10 11S17 15 18 2"/><path class="f" d="M1 16h3v3H1zM17 1h3v3h-3z"/>',helix:'<ellipse cx="10" cy="4" rx="7" ry="2"/><ellipse cx="10" cy="8" rx="7" ry="2"/><ellipse cx="10" cy="12" rx="7" ry="2"/><ellipse cx="10" cy="16" rx="7" ry="2"/>',circ:'<circle cx="10" cy="10" r="8.500"/><path d="M10 10l5-5"/>',
hatch:'<path d="M4 1v18M17 1v18M1 4h18M1 17h18M5 9l4-4M5 14l10-10M7 16l9-9M12 16l4-4"/>',grad:'<path d="M4 1v18M17 1v18M1 4h18M1 17h18"/><path class="f" opacity=".7" d="M4 6h13v9H4z"/>',bound:'<path d="M4 1v18M17 1v18M1 4h18M1 17h18"/>',hole:'<path class="f" fill-rule="evenodd" d="M1 2h12l6 7v9H1zM10 7a3 3 0 1 0 .1 0z"/>',region:'<path class="f" d="M5 5h5v4h6v7H5z"/><path d="M1 1h18v18H1z" stroke-width="2.500" stroke-dasharray="1 1.500"/>',cloud:'<path d="M5 15a3 3 0 0 1-2-5 4 4 0 0 1 2-6 4 4 0 0 1 6-1 4 4 0 0 1 6 3 3 3 0 0 1 0 6 3 3 0 0 1-5 3 3 3 0 0 1-7 0z"/>',ell:'<ellipse cx="10" cy="10" rx="8.500" ry="7"/><path class="f" d="M9 9h3v3H9zM9 1h3v3H9zM17 9h3v3h-3z"/>',
move:'<path d="M10 2v16M2 10h16" stroke-width="2"/><path class="f" d="M10 0l3 4H7zM10 20l3-4H7zM0 10l4-3v6zM20 10l-4-3v6z"/>',rot:'<path d="M7 3a8 8 0 1 0 8 1"/><path class="f" d="M6 0l5 3-5 4z"/>',mirror:'<path d="M8 3v14H1zM12 3v14h7zM10 0v20"/>',copy:'<circle cx="5" cy="5" r="3.500"/><circle cx="6" cy="15" r="3.500"/><circle cx="15" cy="15" r="3.500"/><path d="M12 3h3v4M13 6l2 2 2-2"/>',scale:'<path d="M1 1h18v18H1zM1 10h9v9"/>',lshape:'<path class="f" d="M11 2h6v9h-6zM3 12h14v6H3z"/>',
box3:'<path d="M2 6h12v12H2zM2 6l4-4h12v12l-4 4M14 6l4-4M6 9h5v6H6z"/>',cut:'<path d="M4 2l9 12M15 2L8 14" stroke-width="2.500"/><circle cx="7" cy="17" r="2"/><circle cx="15" cy="16" r="2"/>',extend:'<path d="M1 9h14M18 3v14"/><path d="M1 14h12" stroke-dasharray="2 1"/><path class="f" d="M16 9l-4-3v6z"/>',join:'<path d="M0 10h7M13 10h7"/><path class="f" d="M9 10L5 7v6zM11 10l4-3v6z"/>',fillet:'<path d="M1 19V14C1 6 6 2 12 2h7"/>',
offs:'<circle cx="5" cy="6" r="4" stroke-width="3"/><circle cx="15" cy="6" r="4" stroke-width="3"/><path class="f" d="M7 9h6l1 8H6z"/>',flag:'<path class="f" d="M2 3h16v13l-4-4-4 5-4-5-4 4z"/>',slab:'<path class="f" d="M6 5h13v11H6z"/><path d="M2 5h2v11H2M9 5v11" stroke-width="2"/>',ray3:'<path d="M2 2l16 1M5 4l13 14M5 4v15M5 4l13 5"/>',array:'<path d="M2 2h6v6H2zM11 2h6v6h-6zM2 11h6v6H2zM11 11h6v6h-6z"/>',
cube:cb,ext:'<path class="f" d="M1 5l3-3h9v12l-4 4H1z"/><path d="M1 14h8l5-5M17 16V3M15 5l2-3 2 3"/>',cyl:'<path class="f" d="M1 4c0-4 17-4 17 0v12c0 4-17 4-17 0z"/><ellipse cx="9.500" cy="4" rx="8" ry="2.500" '+dk+' stroke-width=".7"/>',pull:'<path class="f" d="M2 8l3-2h9l3 5-3 7H2z"/><path d="M9 8V1M7 3l2-2 2 2M12 15l6 3"/>',pyr:'<path class="f" d="M10 1l9 12-9 6-9-6z"/><path d="M10 2v17" '+dk+' stroke-width=".6"/>',rev:'<path class="f" d="M2 9c4-5 12-5 16 0l-1 8H3z"/><path d="M2 4c4-4 12-4 16 0"/>',
union:'<path class="f" d="M7 4l3-3h9v9l-4 4h-2l-3 5H1v-9l3-4h3z"/>',slice:'<path class="f" d="M2 5l3-3h14v4l-3 4H2zM2 12h14l3-3v5l-3 4H2z"/>',chop:'<path class="f" d="M8 3h10v15H8z"/><path d="M2 2l4 16M5 2l3 16"/>',zig:'<path d="M14 2L6 6l8 5-8 7" stroke-width="2.500"/>',tee:'<path class="f" d="M8 2h4v11h7v5H1v-5h7z"/>',cross:'<path class="f" d="M8 2h4v7h7v4h-7v6H8v-6H1V9h7z"/>',comb:'<path class="f" d="M1 3h4v3h3V3h4v3h3V3h4v15H1z"/>',lsh2:'<path class="f" d="M2 2h4v10h13v6H2z"/>',
sub:'<circle class="f" cx="12" cy="10" r="6"/><circle cx="8" cy="10" r="6"/>',drill:'<path class="f" d="M2 14L14 2l4 3L6 18z"/><path d="M5 14L16 4" '+dk+'/>',chops:'<path class="f" d="M2 2h14l2 3H4zM2 6h14l2 3H4zM3 10h14l2 3H5zM4 14h14l1 4H6z"/>',wedge:'<path class="f" d="M2 13l15-7v12H8z"/>',blk:'<path class="f" d="M1 9l5-5h9v3l4-3v9l-4 5h-5v-3l-3 3H1z"/><path d="M5 9h7v6" '+dk+'/>',lay:'<path class="f" d="M2 2h5v10h8l4 2-3 4H2z"/><path d="M10 5c3-2 6-1 7 3"/>',
inter:'<path class="f" d="M7 4l3-3h9v9l-4 4H7z"/><path d="M2 7h9v11H2z" stroke-width="2"/>',split:'<path class="f" d="M2 5l3-3h3v12l-3 4H2zM12 5l3-3h4v12l-3 4h-4z"/><path d="M10 1v18"/>',extf:'<path class="f" d="M2 5l3-3h3v12l-3 4H2zM8 5l2-3h2v12l-2 4H8z"/><path d="M13 10h6M16 7l3 3-3 3"/>',shell:'<path class="f" fill-rule="evenodd" d="M1 6l5-4h13v11l-5 6H1zM4 8v8h8V8z"/><path class="f" d="M5 9h6v6H5z"/>',weight:'<path class="f" fill-rule="evenodd" d="M1 6l4-4h14v10l-4 5H1zM4 8v6h9V8z"/><path d="M6 11h6" stroke-width="2"/>',holes:cb+'<path d="M3 8l8 8M11 8l-8 8" '+dk+'/>',mm:'<path d="M2 18V3l8 9 8-9v15" stroke-width="2"/>',
blkin:'<path class="f" d="M9 1h7l3 3v9h-6V8H9z"/><path d="M2 9h9v7H2z"/><circle cx="14" cy="15" r="4"/>',blknew:'<path d="M2 7h10v8H2z"/><circle cx="13" cy="15" r="4"/><path d="M15 0v10M11 5h8M12 2l6 6M18 2l-6 6"/>',blked:'<path d="M2 5h12v11H2z"/><circle cx="14" cy="15" r="4"/>'+'<path class="f" d="M17 1l2 2-7 9-3 1z"/>',asm:'<path class="f" d="M2 2h7v8H2zM2 11h7v7H2zM10 9h8v9h-8z"/><path d="M1 10.500h9v8" '+dk+'/>',asm2:'<path class="f" d="M1 4h6v6H1zM2 11h7v7H2zM10 11h7v7h-7z"/><circle cx="14" cy="5" r="4" stroke-width="3"/>',
metric:'<path class="f" d="M3 1h11v9H8v8H1V8h2z"/><circle class="f" cx="15" cy="11" r="4"/><path d="M3 12h3M3 15h3" '+dk+'/>',swap:'<path class="f" d="M2 2h9v6H2zM10 12h8v7h-8z"/><path d="M13 3h4v6M6 11v5h3"/>',tree:'<path d="M1 2h8v6H1zM10 12h8v6h-8zM12 5h5v5"/><circle cx="8" cy="15" r="3"/>',box3f:'<path class="f" d="M10 1l9 4v9l-9 5-9-5V5z"/><path d="M1 5l9 4 9-4M10 9v10" '+dk+' stroke-width=".8"/>',rename:'<path class="f" d="M3 8h10v4H3z"/><path d="M1 6h13v8H1M14 3h4M16 3v14M14 17h4M18 6h1v8h-1"/>',
xref:'<path class="f" d="M8 6h6l5 5v7H3v-6h5z"/><path d="M3 9V4c0-4 5-4 5 0v6c0 3-3 3-3 0V5"/>',xjoin:'<path class="f" d="M1 10h7v8H1zM10 6h5l4 4v8h-9z"/><path d="M9 2v13M3 4v5"/>',xrefe:'<path class="f" d="M8 6h6l4 4-7 7H3v-5h5z"/><path d="M3 9V4c0-4 5-4 5 0v6M18 9l-6 9"/>',
lay1:'<path class="f" d="M1 1h18v18H1z"/><path d="M3 4v12h6M9 3v14M13 3v14M9 7h9M9 12h9M3 4l6 12" '+dk+' stroke-width=".8"/>',page:'<path class="f" d="M3 1h9l4 4v5H9v6H3z"/><path class="f" d="M10 11h9v8h-9z"/><path d="M3 5h9M3 9h9M6 2v14M12 14h6M12 17h6" '+dk+' stroke-width=".7"/>',newlay:'<path d="M3 4h10M3 4v14h13v-8M1 2h4M1 18h4M14 18h4"/><path d="M15 0v10M10 5h9M12 2l6 6M18 2l-6 6"/>',layx:'<path class="f" d="M1 1h12v9H1z"/><path d="M8 9h11v9H8zM10 12v4h4zM15 3h3v4M2 13v4h4"/>',lay2:'<path d="M1 1h18v18H1z"/><path class="f" d="M8 4h10v9l-6 3z"/><path d="M3 4v12h6z"/>',tag:'<path class="f" d="M3 6l6-4 9 10-6 7L4 12z"/><path d="M6 8l7 8" '+dk+'/>',
vbase:vb,vgrid:'<path class="f" d="M1 1h7v5H1zM10 1h8v5h-8zM1 14h8v5H1z"/><path d="M1 8h7v4H1zM10 8h8v10h-8z"/>',vsec:'<path class="f" d="M1 2h6v5h5v6H1zM14 7h5v6h-5z"/><path d="M13 1v18M13 2h4M13 18h4"/>',vsed:'<path d="M3 2v16M1 4h4M1 16h4M6 3h3"/><path class="f" d="M6 7h5v4h5l-3 5H6z"/>'+'<path class="f" d="M17 2l2 2-6 8-2 0z"/>',vdet:'<path class="f" d="M1 12h18v6H1z"/><circle cx="10" cy="9" r="8"/><path class="f" d="M8 4h3v6h5c0 6-8 5-9 0z"/>',vedit:'<path class="f" d="M1 2h7v5h9l-6 7H1z"/>'+pen,vupd:'<path class="f" d="M1 2h6v5h10v2l-6 1-2 5H1z"/><path d="M9 14c1-5 8-5 9 0-1 5-8 5-9 0z" stroke-width="2"/>',
ta:T('A',2,18,22),tab:'<path class="f" d="M7 1h12v12H7z"/><path class="f" d="M1 6h13v13H1z"/><text x="3" y="17" font-size="12" font-weight="700" fill="#3c4453" stroke="none" font-family="Open Sans">A</text>',ta2:'<path d="M1 14L6 1l5 13M3 10h6"/><path d="M10 12h7v6h-7z" class="f"/>',abc:T('ABC',1,8,8)+'<path d="M5 13l4 5 7-9" stroke-width="2"/>',xmark:'<circle class="f" cx="10" cy="10" r="7"/><path d="M5 5l10 10M15 5L5 15" '+dk+'/><path d="M1 1l3 3M19 1l-3 3M1 19l3-3M19 19l-3-3"/>',
lead:'<circle cx="15" cy="5" r="3.500"/><path d="M11 5H8L3 16"/><path class="f" d="M1 19l1-7 5 3z"/>',lead2:'<circle cx="14" cy="5" r="3.500"/><circle cx="14" cy="13" r="3.500"/><path d="M10 5H8L3 16"/><path class="f" d="M1 19l1-7 5 3z"/>',n123:T('123',0,15,11),n12:T('123',1,9,10)+'<path d="M3 13h14M14 10v8"/>',star:'<path class="f" d="M8 0l2 6 6 2-6 2-2 6-2-6-6-2 6-2z"/><path class="f" d="M9 11h10v8H9z"/>',find:'<circle cx="9" cy="9" r="8"/><path d="M15 15l4 5" stroke-width="2.500"/>'+T('A',5,13,12),
tbl1:'<path class="f" d="M1 2h14v4h4v12H5v-3H1z"/><path d="M5 6h14M5 10h14M5 14h14M9 6v12M14 6v12M2 4h12" '+dk+' stroke-width=".8"/>',tbl:'<path d="M1 2h18v16H1zM1 7h18M1 11h18M1 15h18M7 7v11M13 7v11"/>',texp:'<path class="f" d="M1 2h7v14H1z"/><path class="f" d="M9 7h6V4l5 5-5 5v-3H9z" opacity=".7"/>',ttree:'<path d="M1 2h9v4M3 4v13h3M6 9h5M9 11h5v6H9zM14 11h5v6h-5z"/>',calc:'<path class="f" d="M2 5l4-3h11v12l-4 4H2z"/><path d="M4 8h8M4 13h8M6 6v4M10 11v4" '+dk+'/>',
grp:br+'<path d="M15 0v8M11 4h8" stroke-width="2"/>',grpx:'<path d="M2 2h6v6H2zM12 2h3v16h-3M14 9l5 5M19 9l-5 5"/><circle cx="5" cy="14" r="3"/>',grpl:br+'<path class="f" d="M8 10h11v9H8z"/><path d="M10 13h7M10 16h7" '+dk+'/>',grpe:br+pen,grps:br+'<path class="f" d="M11 8l8 8h-4l2 4-3-1-3-3z"/>',grpo:'<path d="M4 2H1v16h3M15 2h3v16h-3"/><path class="f" d="M7 3h6v5H7z" opacity=".6"/><circle class="f" cx="10" cy="14" r="3"/>',
t_blk:'<path class="f" d="M1 8h14v8H1z"/><circle class="f" cx="14" cy="15" r="4"/><circle cx="14" cy="15" r="4" '+dk+' stroke-width=".6"/><path d="M14 8V3c0-3 4-3 4 0v5c0 2-2 2-2 0V4" stroke-width=".7"/>',t_cube:'<path class="f" d="M1 5l4-4h13v12l-3 5H1z"/><path d="M1 5h14v13M15 5l3-4" '+dk+' stroke-width=".4"/>',t_pl:'<path d="M1 16h13M14 5c7 0 7 10 0 11" stroke-width="1"/><path class="f" d="M0 15h2v2H0zM13 4h2v2h-2zM13 15h2v2h-2z"/>',t_circ:'<circle cx="10" cy="10" r="9"/>',t_spl:'<path d="M1 19C1 3 8 6 11 11S19 19 19 2"/><circle cx="15" cy="12" r="3"/>',t_a:T('A',2,18,23),t_lead:'<circle cx="16" cy="5" r="4.500"/><path d="M11 5H8L3 16"/><path class="f" d="M1 18V12l4 2z"/>',
t_tag:'<path class="f" d="M1 1h8l10 10-8 8L1 8z"/><path d="M6 7l7 7M9 6l6 6" '+dk+' stroke-width=".7"/><circle cx="4" cy="4" r="1.500" fill="#3c4453" stroke="none"/>',t_reg:'<path class="f" d="M4 4h13v13H4z"/><path d="M1 6V1h5M14 1h5v5M19 14v5h-5M6 19H1v-5"/>',t_cloud:'<path class="f" d="M4 16a4 4 0 0 1-2-6 4 4 0 0 1 2-6 4 4 0 0 1 6-2 4 4 0 0 1 7 2 4 4 0 0 1 1 7 4 4 0 0 1-3 6 4 4 0 0 1-6 1 4 4 0 0 1-5-2z"/><text x="9" y="17" font-size="13" font-weight="700" fill="#5a606b" stroke="none">?</text>',
t_cl2:'<path class="f" d="M4 15a4 4 0 0 1-2-6 4 4 0 0 1 2-6 4 4 0 0 1 6-1 4 4 0 0 1 7 2 4 4 0 0 1 1 7v7H9z"/><path d="M9 11h10v8H9zM12 14h5M12 17h5" '+dk+' stroke-width=".7"/>',t_blk2:'<path class="f" d="M10 1h7l2 3v11h-9z" opacity=".7"/><path class="f" d="M1 7h13v8H1z"/><circle class="f" cx="14" cy="15" r="4.500"/><circle cx="14" cy="15" r="4" '+dk+' stroke-width=".5"/>',t_brick:'<path class="f" d="M0 0h20v20H0z"/><path d="M0 5h20M0 10h20M0 15h20M7 0v5M14 5v5M4 5v5M9 10v5M5 15v5M16 15v5" '+dk+' stroke-width=".5"/>',t_brick2:'<path class="f" d="M0 0h20v20H0z"/><path d="M0 5h12M0 10h8M7 0v5M4 5v5" '+dk+' stroke-width=".5"/><path d="M0 20L8 10l6 2 5-8v16z" fill="#a0a3aa" stroke="none"/><path d="M12 11l7-7" stroke="#6f747e" stroke-width="3"/>',t_dwg:'<path class="f" d="M1 1h13v17H1z"/><path d="M1 5h13M5 1v17M4 4h2v2H4z" stroke="#666" stroke-width=".7"/><path class="f" d="M11 9h8v11h-8z" style="stroke:#555;stroke-width:.6"/><path d="M12 11h6v3h-6z" fill="#1e84dc" stroke="none"/><path d="M12 16.500h5M13 18.500h5" stroke="#444" stroke-width=".7"/>'};
const svg=n=>`<svg viewBox="0 0 20 20" aria-hidden="true">${I[n]}</svg>`;
document.querySelectorAll('[data-icons]').forEach(r=>{
 r.innerHTML=r.dataset.icons.split(' ').map(t=>{
  if(t==='|')return '<i class="bar"></i>';
  let c='rb';
  if(t[0]==='-'){c+=' dim';t=t.slice(1)}
  if(t[0]==='*'){c+=' on';t=t.slice(1)}
  const more=t.endsWith('+'); if(more)t=t.slice(0,-1);
  return `<button class="${c}" aria-label="${t}">${svg(t)}</button>`+(more?`<button class="cr" aria-label="${t} options"><i class="tri"></i></button>`:'');
 }).join('')});
document.querySelectorAll('[data-tools]').forEach(r=>{
 r.innerHTML=r.dataset.tools.split(' ').map(t=>{const on=t[0]==='*';if(on)t=t.slice(1);return `<button class="tool${on?' on':''}" aria-label="${t}">${svg(t)}</button>`}).join('')});
/* 32x32 command pictures of the side list */
const base='<path d="M0 0h32v32H0z" fill="url(#gr)"/>',cap='<text x="0" y="31" font-size="8" font-weight="700" fill="#eee" font-family="Liberation Sans">A&gt;V&gt;C&gt;</text>',l='fill="#c4c4c4" stroke="#666" stroke-width=".8"';
const N={
n_chop:base+`<path d="M2 2h22l6 3v3H6zM2 7h22l6 5H8zM6 12h20l5 5H12zM8 17h18l5 5H14z" ${l}/>`+cap,n_drill:base+`<path d="M4 20L8 12 30 1 24 8z" ${l}/><path d="M8 16L26 4" stroke="#777"/>`+cap,n_fix:base+`<path d="M2 1h8v22H2zM10 13h14v5H10zM24 11h6v10h-6z" ${l}/>`+cap,
n_lay:`<path d="M1 3l4-3h4v18l22-2-4 8H1z" ${l}/><path d="M15 6c5-3 8 0 9 4" stroke="#999" stroke-width="3" fill="none"/>`+cap,n_red:base+`<path d="M2 6l5-3h24v14l-4 4H2z" ${l}/><path d="M5 9h19v9H5zM8 11h14v5H8z" fill="#aaa" stroke="#444"/>`+cap,n_hole:base+`<path d="M3 8l6-7h22v20l-5 6H3z" ${l}/><circle cx="14" cy="17" r="7" fill="#999" stroke="#555"/><path d="M5 9l18 17M23 9L5 26" stroke="#666"/>`+cap,
n_multi:base+`<path d="M27 2L8 9l18 6L6 28" stroke="#d4d4d4" stroke-width="5" fill="none"/><path d="M27 4L11 10l17 6L9 26" stroke="#777" fill="none"/>`+cap,n_tab:base+`<path d="M0 14l9-5v4l6-5v4l8-6v4l9-8v22H0z" fill="#8f8f8f" stroke="#ddd" stroke-width=".8" stroke-dasharray="3 2"/>`+cap,n_dxf:`<path d="M1 1h16l8 8v23H1z" fill="#d8d8d8"/><path d="M14 10h10V6l8 6-8 6v-4H14z" fill="#888"/><path d="M0 20h26v12H0z" fill="#999"/><text x="2" y="30" font-size="11" font-weight="600" fill="#fff" font-family="Liberation Sans">DXF</text>`,
n_nc:base+`<path d="M2 13L15 3 30 13 16 23z" ${l}/><path d="M8 13l7-5 4 3-4 3 3 3" stroke="#777" fill="none"/>`+cap,n_off:base+`<g fill="none" stroke="#ddd"><circle cx="8" cy="8" r="6"/><circle cx="24" cy="8" r="6"/><circle cx="8" cy="8" r="3"/><circle cx="24" cy="8" r="3"/><path d="M10 14v9h12v-9l-6 5z"/></g>`+cap,n_asm:base+`<path d="M3 3h8v9H3zM3 12h8v8H3zM12 12h8v8h-8z" ${l}/>`+cap,
n_met:`<path d="M8 1h18v14H8zM1 11h12v18H1z" ${l}/><circle cx="25" cy="13" r="6" ${l}/><path d="M3 13h8v6H3z" fill="#555"/><path d="M3 22h8M3 26h8" stroke="#555"/>`+cap,n_det:`<path d="M0 0h15v13H0zM8 6h15v13H8zM16 12h15v12H16z" ${l}/><path d="M3 3v7l7 0zM11 9v7h7zM19 15v6h7z" fill="#444"/>`+cap,n_dim:base+`<path d="M12 2h19v18H12z" fill="#ddd" stroke="#555"/><circle cx="20" cy="11" r="3" fill="none" stroke="#444"/><path d="M14 17L27 5M6 2v19M3 5l3-3 3 3M3 18l3 3 3-3" stroke="#666" fill="none"/>`+cap,n_mark:base+'<circle cx="16" cy="13" r="11" fill="#c4c4c4" stroke="#eee"/><path d="M7 4l18 18M25 4L7 22" stroke="#666"/>'};
document.querySelectorAll('.navi').forEach(b=>{const k=b.dataset.i;b.insertAdjacentHTML('afterbegin',`<svg viewBox="0 0 32 32" aria-hidden="true">${k==='caliper'?'<use href="#caliper"/>':N[k]}</svg>`)});
</script>
</body>
</html>
